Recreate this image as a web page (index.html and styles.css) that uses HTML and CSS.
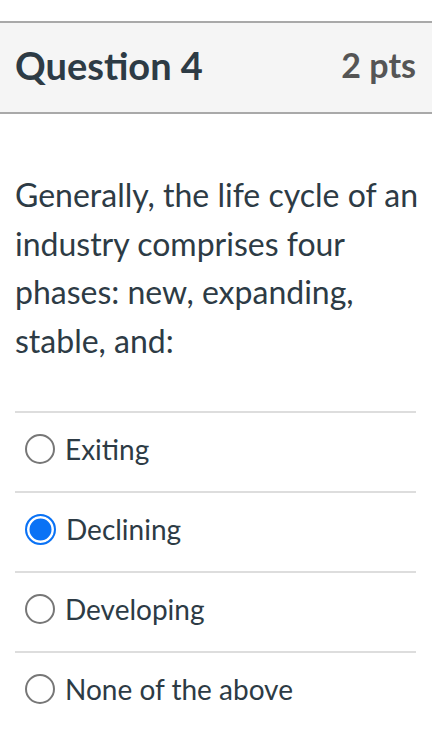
FILE: index.html
```html
<!DOCTYPE html>
<html>
<head>
<meta charset="utf-8">
<link rel="stylesheet" href="styles.css">
</head>
<body>
<div class="quiz">
  <div class="q-header">
    <h2 class="q-title">Question 4</h2>
    <div class="q-points">2 pts</div>
  </div>
  <div class="q-body">
    <p class="q-text">Generally, the life cycle of an industry comprises four phases: new, expanding, stable, and:</p>
    <div class="answers">
      <label class="answer"><span class="radio"></span><span class="label">Exiting</span></label>
      <label class="answer"><span class="radio checked"></span><span class="label">Declining</span></label>
      <label class="answer"><span class="radio"></span><span class="label">Developing</span></label>
      <label class="answer"><span class="radio"></span><span class="label">None of the above</span></label>
    </div>
  </div>
</div>
</body>
</html>
```
FILE: styles.css
```css
html, body {
  margin: 0;
  padding: 0;
  background: #fff;
}
body {
  font-family: Lato, "Noto Sans", sans-serif;
  color: #2d3b45;
  width: 432px;
  overflow: hidden;
}
.quiz {
  padding-top: 21px;
}
.q-header {
  display: flex;
  justify-content: space-between;
  align-items: center;
  box-sizing: border-box;
  height: 93px;
  padding: 0 16px 6px 15px;
  background: #f5f5f5;
  border-top: 2px solid #a9a9a9;
  border-bottom: 2px solid #a9a9a9;
}
.q-title {
  margin: 0;
  font-size: 38px;
  font-weight: 700;
  color: #2d3b45;
}
.q-points {
  font-size: 34px;
  font-weight: 700;
  color: #555;
}
.q-body {
  padding: 0 16px 0 15px;
}
.q-text {
  margin: 57px -12px 46px 0;
  font-size: 32px;
  line-height: 48.5px;
}
.answers {
  display: flex;
  flex-direction: column;
}
.answer {
  display: flex;
  align-items: center;
  gap: 10px;
  box-sizing: border-box;
  height: 80px;
  padding: 0 0 6px 10px;
  border-top: 2px solid #ddd;
  font-size: 28px;
}
.radio {
  box-sizing: border-box;
  width: 30px;
  height: 30px;
  border-radius: 50%;
  border: 2px solid #777;
  background: #fff;
  flex: none;
}
.radio.checked {
  width: 31px;
  height: 31px;
  border: 2.5px solid #0a72f5;
  box-shadow: inset 0 0 0 2.5px #fff, inset 0 0 0 14px #0a72f5;
}
.label {
  line-height: 1;
}
```
